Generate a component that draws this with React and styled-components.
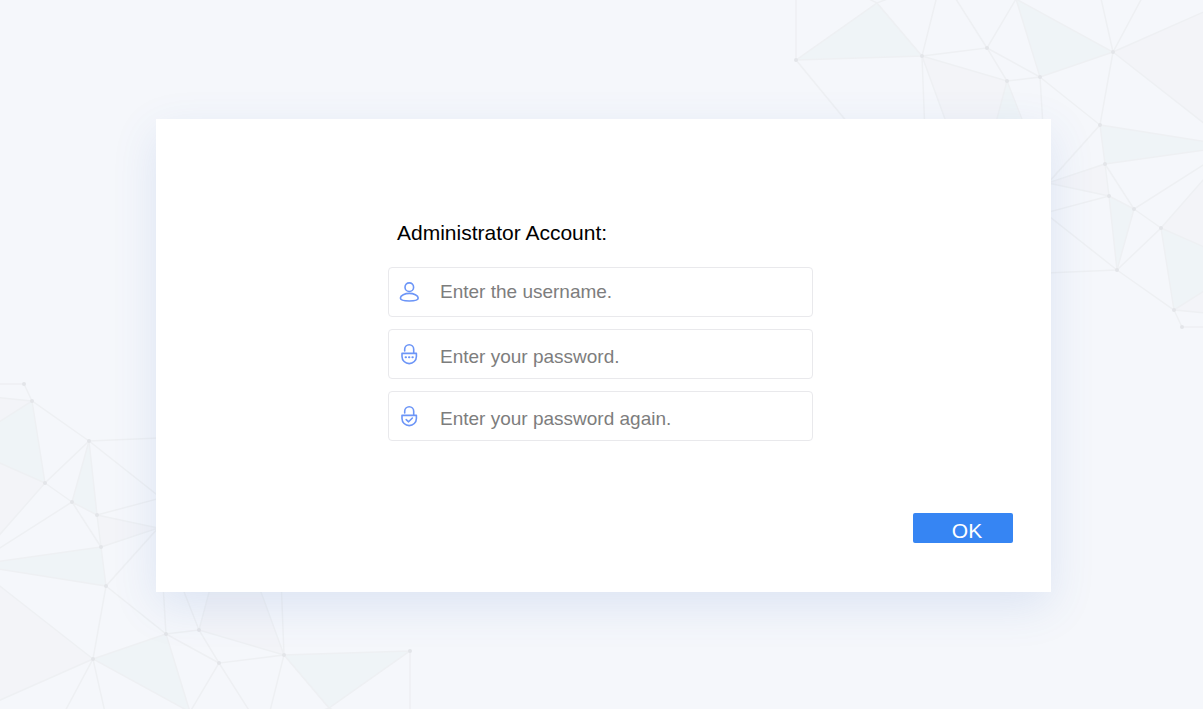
import React from 'react'
import styled, { createGlobalStyle } from 'styled-components';

const GlobalStyle = createGlobalStyle`
    body {
      margin: 0;
      background-color: #f5f7fb;
      font-family: "Liberation Sans", Arial, sans-serif;
    }
`;

const Page = styled.main`
    position: relative;
    display: flex;
    min-height: 100vh;
    padding: 119px 152px 117px 156px;
    box-sizing: border-box;
    overflow: hidden;

    @media screen and (max-width: 768px) {
      padding: 40px 20px;
    }
`;

const MeshImage = styled.svg`
    position: absolute;
    width: 416px;
    height: 330px;
    overflow: visible;
    pointer-events: none;
    ${({ $corner }) => $corner === 'top'
      ? 'top: 0; right: -3px;'
      : 'bottom: -2px; left: 0; transform: rotate(180deg);'}
`;

const Card = styled.form`
    position: relative;
    display: flex;
    flex: 1;
    flex-direction: column;
    justify-content: space-between;
    padding: 101px 38px 49px 0;
    box-sizing: border-box;
    background-color: #fff;
    box-shadow: 0 14px 42px rgba(60, 105, 190, 0.13);

    @media screen and (max-width: 768px) {
      padding: 40px 20px;
      gap: 40px;
    }
`;

const Fields = styled.fieldset`
    display: flex;
    flex-direction: column;
    gap: 12px;
    min-width: 0;
    margin: 0 200px 0 232px;
    padding: 0;
    border: 0;

    @media screen and (max-width: 768px) {
      margin: 0;
    }
`;

const Heading = styled.legend`
    padding: 0 9px;
    margin-bottom: 21px;
    font-size: 21px;
    line-height: 26px;
    color: #000;
`;

const Field = styled.label`
    display: flex;
    align-items: center;
    height: 50px;
    padding-left: 10px;
    box-sizing: border-box;
    border: 1px solid #e9e9ec;
    border-radius: 4px;
    background-color: #fff;
`;

const FieldIcon = styled.svg`
    flex: none;
    width: 20px;
    height: 20px;
    overflow: visible;
    fill: none;
    stroke: #6c95f7;
    stroke-width: 1.6;
    stroke-linecap: round;
    stroke-linejoin: round;
`;

const Input = styled.input`
    flex: 1;
    min-width: 0;
    height: 100%;
    margin-left: 21px;
    padding: ${({ type }) => (type === 'password' ? '6px 0 0' : '0')};
    box-sizing: border-box;
    border: 0;
    outline: none;
    background: transparent;
    font-family: inherit;
    font-size: 19px;
    color: #333;

    &::placeholder {
      color: #7d7d7d;
      opacity: 1;
    }
`;

const Button = styled.button`
    align-self: flex-end;
    width: 100px;
    height: 30px;
    padding: 5px 0 0 8px;
    border: 0;
    border-radius: 2px;
    background-color: #3685f3;
    font-family: inherit;
    font-size: 21px;
    line-height: 25px;
    color: #fff;
    cursor: pointer;
`;

const nodes = [
  [796, 60], [922, 56], [987, 48], [1040, 77], [1007, 81], [1113, 52],
  [1100, 125], [1105, 164], [1109, 196], [1134, 209], [1161, 228],
  [1117, 270], [1174, 310], [1182, 327],
];

const Mesh = ({ corner }) => (
  <MeshImage $corner={corner} viewBox="790 0 416 330" aria-hidden="true">
    <g fill="#eff4f7">
      <path d="M796 60L877 3L922 56Z" />
      <path d="M1016 -1L1113 52L1040 77Z" />
      <path d="M1100 125L1233 146L1105 164Z" />
      <path d="M1109 196L1134 209L1117 270Z" />
      <path d="M1161 228L1245 265L1174 310Z" />
      {corner === 'top' && <path d="M1007 81L986 160L1036 160Z" />}
    </g>
    <g fill="#f3f4f8">
      <path d="M922 56L1007 81L986 160L960 160Z" />
      <path d="M1048 183L1105 164L1109 196Z" />
      <path d="M1113 52L1260 -13L1233 146Z" />
      <path d="M1161 228L1233 146L1245 265Z" />
      <path d="M1174 310L1245 265L1245 317Z" />
    </g>
    <g fill="none" stroke="#eef0f3" strokeWidth="1.5">
      <path d="M796 -4V60L877 3L922 56L796 60" />
      {corner === 'top' && <path d="M796 60L880 162" />}
      <path d="M867 -2L877 3L890 -2" />
      <path d="M937 -4L922 56L987 48L954 -4" />
      <path d="M926 160L922 56L1007 81L987 48L1016 -1L1040 77L1007 81L986 160" />
      <path d="M922 56L960 160M1007 81L1038 160M987 48L1040 77L1045 160" />
      <path d="M1016 -1L1113 52L1040 77L1100 125L1113 52" />
      <path d="M1100 -6L1113 52L1143 -4M1260 -13L1113 52L1233 146" />
      <path d="M1105 164L1233 146L1100 125L1105 164L1109 196L1117 270" />
      <path d="M1100 125L1048 183L1105 164L1134 209L1109 196L1048 183" />
      <path d="M1109 196L1045 213L1117 270L1134 209L1233 146L1161 228" />
      <path d="M1134 209L1161 228L1117 270L1174 310L1161 228L1245 265L1174 310" />
      <path d="M1117 270L1000 275M1245 317L1174 310L1182 327H1245" />
    </g>
    <g fill="#e3e5e9">
      {nodes.map(([x, y]) => <circle key={`${x}-${y}`} cx={x} cy={y} r="2" />)}
    </g>
  </MeshImage>
)

const UserIcon = () => (
  <FieldIcon viewBox="0 0 20 20" aria-hidden="true">
    <circle cx="10.3" cy="5.2" r="4.3" />
    <path d="M10.3 11.4C6 11.4 1.4 13.6 1.4 16C1.4 18 5.2 19 10.3 19S19.2 18 19.2 16C19.2 13.6 14.6 11.4 10.3 11.4Z" />
  </FieldIcon>
)

const PasswordIcon = () => (
  <FieldIcon viewBox="0 0 20 20" aria-hidden="true">
    <path d="M5.7 7V5.2A4.5 4.5 0 0 1 14.7 5.2V9" />
    <path d="M3 9.4H17.4V12.6A7.2 7 0 0 1 3 12.6Z" />
    <path d="M6.6 13.2H7M10 13.2H10.4M13.4 13.2H13.8" strokeWidth="2" />
  </FieldIcon>
)

const ConfirmIcon = () => (
  <FieldIcon viewBox="0 0 20 20" aria-hidden="true">
    <path d="M5.7 7V5.2A4.5 4.5 0 0 1 14.7 5.2V9" />
    <path d="M3 9.4H17.4V12.6A7.2 7 0 0 1 3 12.6Z" />
    <path d="M7.2 13.6L9.6 15.8L13.4 12" />
  </FieldIcon>
)

const App = () => {
    return (
        <Page>
            <GlobalStyle />
            <Mesh corner="top" />
            <Mesh corner="bottom" />
            <Card onSubmit={(e) => e.preventDefault()}>
                <Fields>
                    <Heading>Administrator Account:</Heading>
                    <Field>
                        <UserIcon />
                        <Input type="text" name="username" aria-label="Username" placeholder="Enter the username." />
                    </Field>
                    <Field>
                        <PasswordIcon />
                        <Input type="password" name="password" aria-label="Password" placeholder="Enter your password." />
                    </Field>
                    <Field>
                        <ConfirmIcon />
                        <Input type="password" name="confirm" aria-label="Confirm password" placeholder="Enter your password again." />
                    </Field>
                </Fields>
                <Button type="submit">OK</Button>
            </Card>
        </Page>
    )
}

export default App
